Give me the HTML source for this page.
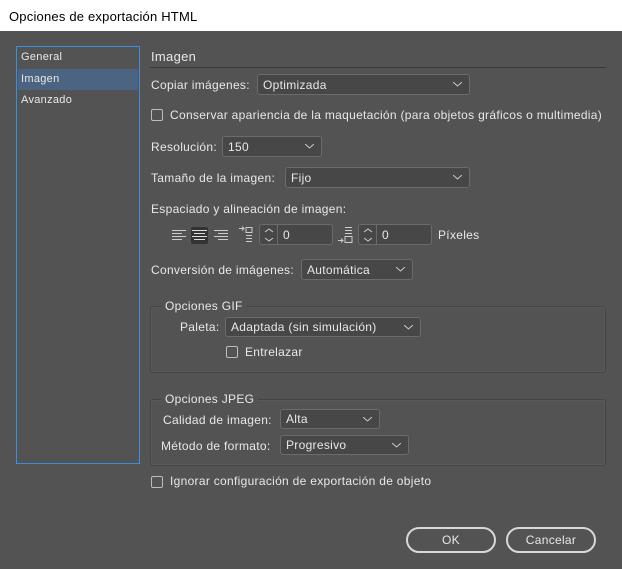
<!DOCTYPE html><html><head><meta charset="utf-8"><style>
*{box-sizing:border-box;margin:0;padding:0}
body{width:622px;height:569px;background:#535353;font-family:"Liberation Sans",sans-serif;font-size:12px;letter-spacing:0.3px;color:#e8e8e8;position:relative;overflow:hidden}
.a{position:absolute;white-space:nowrap;line-height:14px}
.t{position:absolute;left:0;top:0;width:622px;height:31px;background:#fff;color:#000;font-size:13px;padding:9px 0 0 9px;letter-spacing:0.2px}
.list{position:absolute;left:16px;top:46px;width:124px;height:418px;border:1px solid #3b8fe3;background:#535353}
.li{position:absolute;left:4px;font-size:11px}
.sel{position:absolute;left:1px;top:22px;width:120px;height:21px;background:#4b6482}
.dd{position:absolute;height:21px;background:#474747;border:1px solid #6b6b6b;border-radius:3px;padding:3px 0 0 5px;line-height:15px;white-space:nowrap}
.dd svg{position:absolute;right:7px;top:7px}
.cb{position:absolute;width:12px;height:12px;border:1px solid #bdbdbd;border-radius:2px}
.grp{position:absolute;border:1px solid #444;border-radius:3px;box-shadow:inset 0 0 0 1px #5a5a5a}
.gl{position:absolute;background:#535353;padding:0 4px}
.btn{position:absolute;height:26px;border:2px solid #d8d8d8;border-radius:13px;text-align:center;line-height:22px}
.in{position:absolute;height:21px;border:1px solid #6b6b6b;border-radius:3px;background:#474747}
</style></head><body>
<div class="t">Opciones de exportación HTML</div>
<div class="list"><div class="sel"></div>
<div class="li" style="top:4px">General</div>
<div class="li" style="top:26px">Imagen</div>
<div class="li" style="top:47px">Avanzado</div></div>

<div class="a" style="left:151px;top:50px;font-size:13px">Imagen</div>
<div style="position:absolute;left:150px;top:67px;width:456px;height:1px;background:#3a3a3a"></div>

<div class="a" style="left:151px;top:78px">Copiar imágenes:</div>
<div class="dd" style="left:257px;top:74px;width:213px">Optimizada<svg width="9" height="5"><path d="M0 0L4.5 4 9 0" stroke="#ccc" fill="none"/></svg></div>

<div class="cb" style="left:151px;top:109px"></div>
<div class="a" style="left:170px;top:108px">Conservar apariencia de la maquetación (para objetos gráficos o multimedia)</div>

<div class="a" style="left:151px;top:140px">Resolución:</div>
<div class="dd" style="left:222px;top:136px;width:100px">150<svg width="9" height="5"><path d="M0 0L4.5 4 9 0" stroke="#ccc" fill="none"/></svg></div>

<div class="a" style="left:151px;top:171px">Tamaño de la imagen:</div>
<div class="dd" style="left:285px;top:167px;width:185px">Fijo<svg width="9" height="5"><path d="M0 0L4.5 4 9 0" stroke="#ccc" fill="none"/></svg></div>

<div class="a" style="left:151px;top:202px">Espaciado y alineación de imagen:</div>
<svg style="position:absolute;left:170px;top:226px" width="120" height="20">
<g stroke="#ccc" stroke-width="1"><path d="M2 4.5h14M2 7.5h10M2 10.5h14M2 13.5h10"/></g>
<rect x="21" y="1" width="17" height="17" rx="2" fill="#333"/>
<g stroke="#ddd"><path d="M22 4.5h15M24 7.5h11M22 10.5h15M24 13.5h11"/></g>
<g stroke="#ccc"><path d="M44 4.5h14M48 7.5h10M44 10.5h14M48 13.5h10"/></g>
<g stroke="#ccc" fill="none"><path d="M69 2.5h5M72 0.5l2 2-2 2M76 1.5h6v5h-6zM76 9.5h6M76 12.5h6M76 15.5h6"/></g>
</svg>
<div class="in" style="left:259px;top:224px;width:74px"><div style="position:absolute;left:17px;top:0;width:1px;height:19px;background:#6b6b6b"></div>
<svg style="position:absolute;left:4px;top:3px" width="10" height="14"><path d="M1 4l4-3 4 3M1 10l4 3 4-3" stroke="#ccc" fill="none"/></svg>
<div class="a" style="left:23px;top:3px">0</div></div>
<svg style="position:absolute;left:338px;top:226px" width="20" height="20"><g stroke="#ccc" fill="none"><path d="M7 1.5h7M7 4.5h7M7 7.5h7M7 10.5h7v6h-7zM0 14.5h5M3 12.5l2 2-2 2"/></g></svg>
<div class="in" style="left:358px;top:224px;width:74px"><div style="position:absolute;left:17px;top:0;width:1px;height:19px;background:#6b6b6b"></div>
<svg style="position:absolute;left:4px;top:3px" width="10" height="14"><path d="M1 4l4-3 4 3M1 10l4 3 4-3" stroke="#ccc" fill="none"/></svg>
<div class="a" style="left:23px;top:3px">0</div></div>
<div class="a" style="left:438px;top:228px">Píxeles</div>

<div class="a" style="left:151px;top:263px">Conversión de imágenes:</div>
<div class="dd" style="left:301px;top:259px;width:112px">Automática<svg width="9" height="5"><path d="M0 0L4.5 4 9 0" stroke="#ccc" fill="none"/></svg></div>

<div class="grp" style="left:150px;top:306px;width:456px;height:67px"></div>
<div class="gl a" style="left:161px;top:299px">Opciones GIF</div>
<div class="a" style="left:180px;top:320px">Paleta:</div>
<div class="dd" style="left:225px;top:317px;width:196px;height:20px;padding-top:2px">Adaptada (sin simulación)<svg width="9" height="5"><path d="M0 0L4.5 4 9 0" stroke="#ccc" fill="none"/></svg></div>
<div class="cb" style="left:226px;top:346px"></div>
<div class="a" style="left:245px;top:345px">Entrelazar</div>

<div class="grp" style="left:150px;top:399px;width:456px;height:67px"></div>
<div class="gl a" style="left:161px;top:392px">Opciones JPEG</div>
<div class="a" style="left:163px;top:413px">Calidad de imagen:</div>
<div class="dd" style="left:280px;top:409px;width:100px;height:20px;padding-top:2px">Alta<svg width="9" height="5"><path d="M0 0L4.5 4 9 0" stroke="#ccc" fill="none"/></svg></div>
<div class="a" style="left:161px;top:439px">Método de formato:</div>
<div class="dd" style="left:280px;top:435px;width:129px;height:20px;padding-top:2px">Progresivo<svg width="9" height="5"><path d="M0 0L4.5 4 9 0" stroke="#ccc" fill="none"/></svg></div>

<div class="cb" style="left:151px;top:476px"></div>
<div class="a" style="left:170px;top:474px">Ignorar configuración de exportación de objeto</div>

<div class="btn" style="left:406px;top:527px;width:90px">OK</div>
<div class="btn" style="left:506px;top:527px;width:90px">Cancelar</div>
</body></html>
